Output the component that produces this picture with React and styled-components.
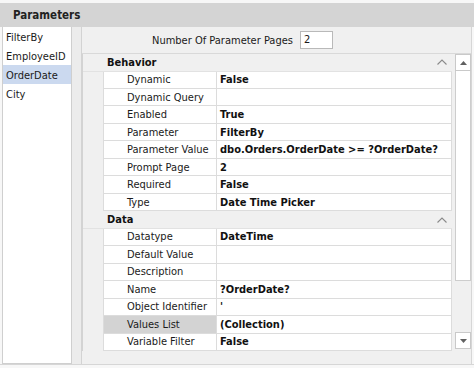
import React from "react";
import styled, { createGlobalStyle } from "styled-components";

const Global = createGlobalStyle`
  html, body { margin: 0; padding: 0; background: #ffffff; }
  body { font-family: "DejaVu Sans Condensed", "DejaVu Sans", sans-serif; font-size: 11px; color: #1a1a1a; }
`;

const boldFont = `font-weight: 700; color: #111;`;

const Frame = styled.div`
  width: 474px;
  height: 368px;
  box-sizing: border-box;
  padding-top: 3px;
  background: #f7f7f7;
  display: flex;
  flex-direction: column;
  overflow: hidden;
`;

const TitleBar = styled.div`
  height: 24px;
  background: #d4d4d4;
  display: flex;
  align-items: center;
  padding-left: 13px;
  ${boldFont}
  font-size: 11.5px;
  color: #222;
`;

const Body = styled.div`
  display: flex;
  height: 337px;
  border-bottom: 1px solid #d6d6d6;
  padding-left: 2px;
  padding-right: 2px;
`;

const List = styled.div`
  width: 68px;
  background: #fff;
  border: 1px solid #cfcfcf;
  border-top: none;
`;

const ListItem = styled.div`
  height: 19px;
  box-sizing: border-box;
  padding-top: 1px;
  display: flex;
  align-items: center;
  padding-left: 3px;
  background: ${(p) => (p.$selected ? "#cbd9ef" : "transparent")};
  white-space: nowrap;
`;

const Splitter = styled.div`
  width: 9px;
  background: #ececec;
  border-right: 1px solid #d3d3d3;
`;

const Right = styled.div`
  flex: 1;
  background: #f0f0f0;
  display: flex;
  flex-direction: column;
  border-right: 1px solid #d6d6d6;
`;

const PagesRow = styled.div`
  height: 26px;
  border-bottom: 1px solid #d9d9d9;
  display: flex;
  align-items: center;
  justify-content: center;
  gap: 7px;
  padding-right: 68px;
`;

const PagesInput = styled.div`
  width: 28px;
  height: 16px;
  background: #fff;
  border: 1px solid #b9b9b9;
  line-height: 16px;
  padding-left: 3px;
  box-sizing: content-box;
`;

const GridArea = styled.div`
  display: flex;
  height: 296px;
`;

const Grid = styled.div`
  width: 370px;
  display: flex;
  flex-direction: column;
`;

const Category = styled.div`
  height: 17.5px;
  display: flex;
  align-items: center;
  justify-content: space-between;
  padding-left: 24px;
  padding-right: 4px;
  ${boldFont}
  border-bottom: 1px solid #e2e2e2;
  box-sizing: border-box;
`;

const Chevron = () => (
  <svg width="12" height="8" viewBox="0 0 12 8">
    <path d="M1.5 6.5 L6 2 L10.5 6.5" fill="none" stroke="#8a8a8a" strokeWidth="1.1" />
  </svg>
);

const Row = styled.div`
  height: 17.47px;
  margin-left: 20px;
  display: grid;
  grid-template-columns: 113px 1fr;
  box-sizing: border-box;
`;

const Cell = styled.div`
  background: ${(p) => (p.$selected ? "#d3d3d3" : "#fff")};
  border-bottom: 1px solid #dcdcdc;
  border-left: 1px solid #dcdcdc;
  ${(p) => (p.$value ? "border-right: 1px solid #dcdcdc;" : "")}
  padding-left: ${(p) => (p.$value ? "3px" : "23px")};
  ${(p) => (p.$value ? boldFont : "")}
  display: flex;
  align-items: center;
  white-space: nowrap;
  overflow: hidden;
  box-sizing: border-box;
`;

const GridBody = styled.div`
  border-left: 1px solid #d3d3d3;
  display: flex;
  flex-direction: column;
`;

const ScrollCol = styled.div`
  width: 16px;
  margin-left: 3px;
  display: flex;
  flex-direction: column;
`;

const ScrollBtn = styled.div`
  height: 17px;
  background: #fff;
  border: 1px solid #c9c9c9;
  box-sizing: border-box;
  display: flex;
  align-items: center;
  justify-content: center;
`;

const Thumb = styled.div`
  height: 210px;
  background: #fff;
  border: 1px solid #cdcdcd;
  border-top: none;
  box-sizing: border-box;
`;

const Track = styled.div`
  flex: 0 0 51px;
`;

const Tri = ({ down }) => (
  <svg width="7" height="4" viewBox="0 0 7 4">
    <path d={down ? "M0 0 L7 0 L3.5 4 Z" : "M0 4 L7 4 L3.5 0 Z"} fill="#606060" />
  </svg>
);

const groups = [
  {
    name: "Behavior",
    rows: [
      ["Dynamic", "False"],
      ["Dynamic Query", ""],
      ["Enabled", "True"],
      ["Parameter", "FilterBy"],
      ["Parameter Value", "dbo.Orders.OrderDate >= ?OrderDate?"],
      ["Prompt Page", "2"],
      ["Required", "False"],
      ["Type", "Date Time Picker"],
    ],
  },
  {
    name: "Data",
    rows: [
      ["Datatype", "DateTime"],
      ["Default Value", ""],
      ["Description", ""],
      ["Name", "?OrderDate?"],
      ["Object Identifier", "'"],
      ["Values List", "(Collection)", true],
      ["Variable Filter", "False"],
    ],
  },
];

export default function App() {
  return (
    <>
      <Global />
      <Frame>
        <TitleBar>Parameters</TitleBar>
        <Body>
          <List>
            {["FilterBy", "EmployeeID", "OrderDate", "City"].map((n) => (
              <ListItem key={n} $selected={n === "OrderDate"}>
                {n}
              </ListItem>
            ))}
          </List>
          <Splitter />
          <Right>
            <PagesRow>
              <span>Number Of Parameter Pages</span>
              <PagesInput>2</PagesInput>
            </PagesRow>
            <GridArea>
              <Grid>
                <GridBody>
                  {groups.map((g) => (
                    <React.Fragment key={g.name}>
                      <Category>
                        <span>{g.name}</span>
                        <Chevron />
                      </Category>
                      {g.rows.map(([k, v, sel]) => (
                        <Row key={k}>
                          <Cell $selected={sel}>{k}</Cell>
                          <Cell $value>{v}</Cell>
                        </Row>
                      ))}
                    </React.Fragment>
                  ))}
                </GridBody>
              </Grid>
              <ScrollCol>
                <ScrollBtn>
                  <Tri />
                </ScrollBtn>
                <Thumb />
                <Track />
                <ScrollBtn>
                  <Tri down />
                </ScrollBtn>
              </ScrollCol>
            </GridArea>
          </Right>
        </Body>
      </Frame>
    </>
  );
}
